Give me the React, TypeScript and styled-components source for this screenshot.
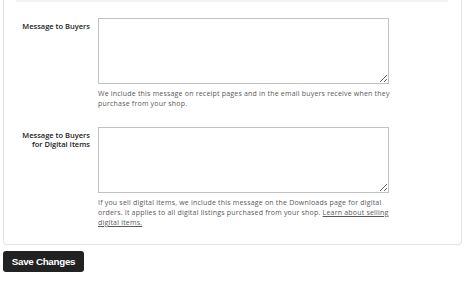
import React from 'react';
import styled, { createGlobalStyle } from 'styled-components';

const GlobalStyle = createGlobalStyle`
  html, body {
    margin: 0;
    padding: 0;
    background: #fff;
  }
  body {
    font-family: "Open Sans", "Liberation Sans", sans-serif;
    color: #222;
  }
`;

const Page = styled.div`
  width: 474px;
  padding: 0 0 0 3px;
  box-sizing: border-box;
`;

const Card = styled.div`
  width: 459px;
  box-sizing: border-box;
  border: 1px solid #e3e3e3;
  border-top: none;
  border-radius: 0 0 4px 4px;
  padding: 0 12px 16px;
`;

const TopBand = styled.div`
  height: 2px;
  background: #f3f3f3;
  margin: 0 0 16px 0;
  width: 432px;
`;

const Row = styled.div<{ $gap?: number }>`
  display: grid;
  grid-template-columns: 74px 291px;
  column-gap: 8px;
  margin-top: ${(p) => p.$gap ?? 0}px;
`;

const Label = styled.label`
  font-size: 7.5px;
  font-weight: 600;
  line-height: 9px;
  text-align: right;
  padding-top: 4px;
  color: #222;
  white-space: nowrap;
`;

const Field = styled.div`
  display: flex;
  flex-direction: column;
`;

const TextArea = styled.textarea`
  width: 291px;
  height: 66px;
  box-sizing: border-box;
  border: 1px solid #c2c2c2;
  border-radius: 0;
  margin: 0;
  padding: 4px;
  font-family: inherit;
  resize: vertical;
  display: block;
`;

const Help = styled.p`
  margin: 5px 0 0;
  font-size: 7px;
  line-height: 10px;
  letter-spacing: 0.2px;
  color: #595959;
  white-space: nowrap;
`;

const HelpLink = styled.a`
  color: #595959;
  text-decoration: underline;
`;

const SaveButton = styled.button`
  margin-top: 6px;
  width: 81px;
  height: 21px;
  background: #222;
  color: #fff;
  border: none;
  border-radius: 3px;
  font-family: "Liberation Sans", Arial, sans-serif;
  font-weight: 700;
  font-size: 9.8px;
  letter-spacing: -0.3px;
  padding: 0;
`;

export default function App() {
  return (
    <Page>
      <GlobalStyle />
      <Card>
        <TopBand />
        <Row>
          <Label>Message to Buyers</Label>
          <Field>
            <TextArea />
            <Help>
              We include this message on receipt pages and in the email buyers receive when they
              <br />
              purchase from your shop.
            </Help>
          </Field>
        </Row>
        <Row $gap={18}>
          <Label>
            Message to Buyers
            <br />
            for Digital Items
          </Label>
          <Field>
            <TextArea />
            <Help>
              If you sell digital items, we include this message on the Downloads page for digital
              <br />
              orders. It applies to all digital listings purchased from your shop.{' '}
              <HelpLink href="#">Learn about selling</HelpLink>
              <br />
              <HelpLink href="#">digital items.</HelpLink>
            </Help>
          </Field>
        </Row>
      </Card>
      <SaveButton>Save Changes</SaveButton>
    </Page>
  );
}
